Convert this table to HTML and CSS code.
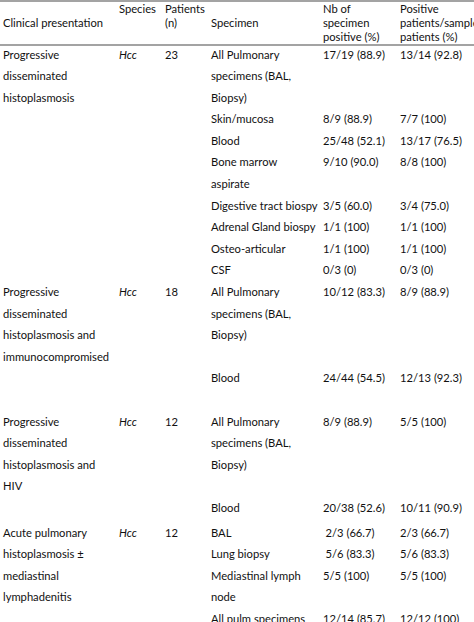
FILE: index.html
```html
<!DOCTYPE html>
<html>
<head>
<meta charset="utf-8">
<link rel="stylesheet" href="styles.css">
</head>
<body>
<div class="table">
  <div class="head">
    <div class="h1 mid">Clinical presentation</div>
    <div class="h2">Species</div>
    <div class="h3">Patients<br>(n)</div>
    <div class="h4 mid">Specimen</div>
    <div class="h5">Nb of<br>specimen<br>positive (%)</div>
    <div class="h6">Positive<br>patients/sampled<br>patients (%)</div>
  </div>

  <div class="group">
    <div class="c1">Progressive<br>disseminated<br>histoplasmosis</div>
    <div class="c2"><i>Hcc</i></div>
    <div class="c3">23</div>
    <div class="subs">
      <div class="sub"><div class="c4">All Pulmonary<br>specimens (BAL,<br>Biopsy)</div><div class="c5">17/19 (88.9)</div><div class="c6">13/14 (92.8)</div></div>
      <div class="sub"><div class="c4">Skin/mucosa</div><div class="c5">8/9 (88.9)</div><div class="c6">7/7 (100)</div></div>
      <div class="sub"><div class="c4">Blood</div><div class="c5">25/48 (52.1)</div><div class="c6">13/17 (76.5)</div></div>
      <div class="sub"><div class="c4">Bone marrow<br>aspirate</div><div class="c5">9/10 (90.0)</div><div class="c6">8/8 (100)</div></div>
      <div class="sub"><div class="c4">Digestive tract biospy</div><div class="c5">3/5 (60.0)</div><div class="c6">3/4 (75.0)</div></div>
      <div class="sub"><div class="c4">Adrenal Gland biospy</div><div class="c5">1/1 (100)</div><div class="c6">1/1 (100)</div></div>
      <div class="sub"><div class="c4">Osteo-articular</div><div class="c5">1/1 (100)</div><div class="c6">1/1 (100)</div></div>
      <div class="sub"><div class="c4">CSF</div><div class="c5">0/3 (0)</div><div class="c6">0/3 (0)</div></div>
    </div>
  </div>

  <div class="group">
    <div class="c1">Progressive<br>disseminated<br>histoplasmosis and<br>immunocompromised</div>
    <div class="c2"><i>Hcc</i></div>
    <div class="c3">18</div>
    <div class="subs">
      <div class="sub extra"><div class="c4">All Pulmonary<br>specimens (BAL,<br>Biopsy)</div><div class="c5">10/12 (83.3)</div><div class="c6">8/9 (88.9)</div></div>
      <div class="sub extra"><div class="c4">Blood</div><div class="c5">24/44 (54.5)</div><div class="c6">12/13 (92.3)</div></div>
    </div>
  </div>

  <div class="group">
    <div class="c1">Progressive<br>disseminated<br>histoplasmosis and<br>HIV</div>
    <div class="c2"><i>Hcc</i></div>
    <div class="c3">12</div>
    <div class="subs">
      <div class="sub extra"><div class="c4">All Pulmonary<br>specimens (BAL,<br>Biopsy)</div><div class="c5">8/9 (88.9)</div><div class="c6">5/5 (100)</div></div>
      <div class="sub gap"><div class="c4">Blood</div><div class="c5">20/38 (52.6)</div><div class="c6">10/11 (90.9)</div></div>
    </div>
  </div>

  <div class="group">
    <div class="c1">Acute pulmonary<br>histoplasmosis ±<br>mediastinal<br>lymphadenitis</div>
    <div class="c2"><i>Hcc</i></div>
    <div class="c3">12</div>
    <div class="subs">
      <div class="sub"><div class="c4">BAL</div><div class="c5 ind">2/3 (66.7)</div><div class="c6">2/3 (66.7)</div></div>
      <div class="sub"><div class="c4">Lung biopsy</div><div class="c5 ind">5/6 (83.3)</div><div class="c6">5/6 (83.3)</div></div>
      <div class="sub"><div class="c4">Mediastinal lymph<br>node</div><div class="c5">5/5 (100)</div><div class="c6">5/5 (100)</div></div>
      <div class="sub"><div class="c4">All pulm specimens</div><div class="c5">12/14 (85.7)</div><div class="c6">12/12 (100)</div></div>
    </div>
  </div>
</div>
</body>
</html>
```

FILE: styles.css
```css
html, body {
  margin: 0;
  padding: 0;
  overflow: hidden;
  background: #ffffff;
}
body {
  font-family: Lato, "Open Sans", sans-serif;
  font-size: 11.2px;
  color: #111111;
  width: 474px;
  height: 622px;
}
.table {
  width: 520px;
  padding-left: 3px;
}
.head {
  display: grid;
  grid-template-columns: 116px 46px 46px 112px 77px 120px;
  border-top: 2px solid #a3a3a3;
  border-bottom: 2px solid #a3a3a3;
  line-height: 14.2px;
  height: 42px;
  margin-left: -3px;
  padding-left: 3px;
}
.head > div {
  white-space: nowrap;
}
.head .mid {
  align-self: center;
}
.group {
  display: grid;
  grid-template-columns: 116px 46px 46px 1fr;
  line-height: 21.6px;
}
.head + .group {
  margin-top: -2.5px;
}
.subs {
  display: flex;
  flex-direction: column;
}
.sub {
  display: grid;
  grid-template-columns: 112px 77px 120px;
  white-space: nowrap;
}
.sub.extra {
  padding-bottom: 21.6px;
}
.sub.gap {
  padding-bottom: 3px;
}
.ind {
  padding-left: 2.5px;
}
```
